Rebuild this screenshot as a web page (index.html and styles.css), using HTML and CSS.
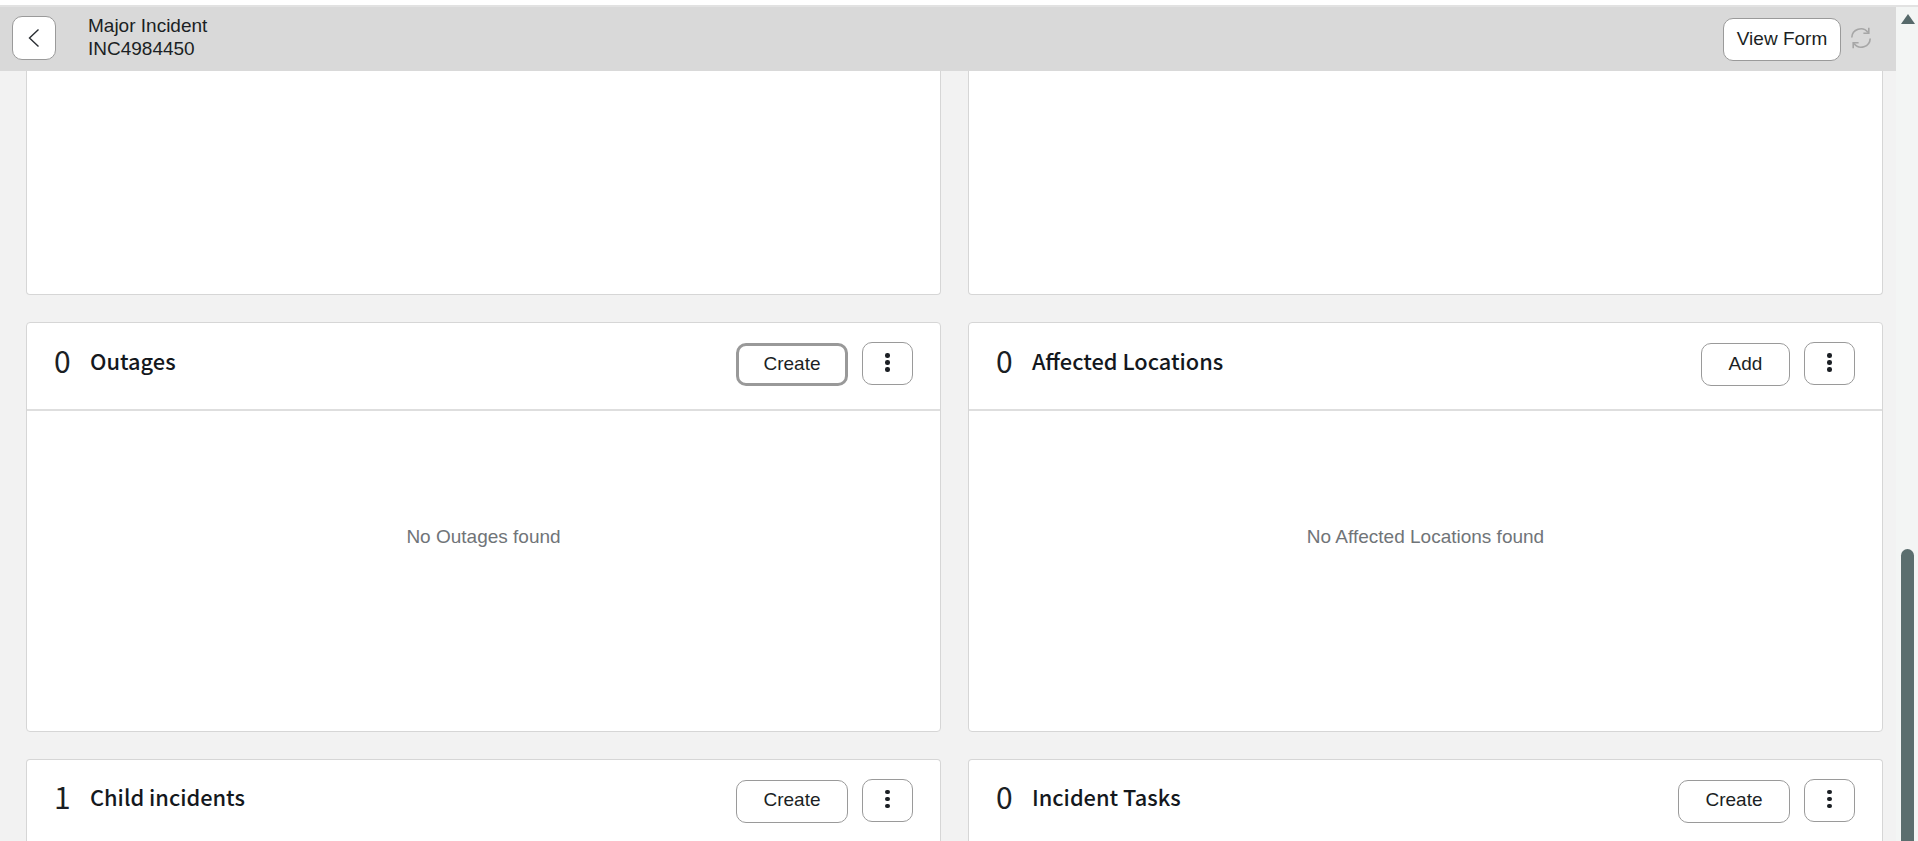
FILE: index.html
```html
<!DOCTYPE html>
<html lang="en">
<head>
<meta charset="utf-8">
<title>Major Incident INC4984450</title>
<link rel="stylesheet" href="styles.css">
</head>
<body>
<div class="top-strip"></div>
<div class="app">
  <main class="main">
    <header class="page-header">
      <button class="btn back-btn" aria-label="Back">
        <svg width="14" height="20" viewBox="0 0 14 20"><path d="M11.5 1.5 L2.5 10 L11.5 18.5" fill="none" stroke="#2a2e33" stroke-width="1.4"/></svg>
      </button>
      <div class="record">
        <div>Major Incident</div>
        <div>INC4984450</div>
      </div>
      <button class="btn view-form">View Form</button>
      <svg class="refresh" width="22" height="22" viewBox="0 0 22 22" fill="none" stroke="#a6a6a6" stroke-width="1.6">
        <path d="M1.8 10.5 A9 9 0 0 1 18 5.4"/>
        <path d="M20.2 11.5 A9 9 0 0 1 4 16.6"/>
        <path d="M18.8 0.8 V6.2 H13.4" />
        <path d="M3.2 21.2 V15.8 H8.6" />
      </svg>
    </header>
    <div class="cards">
      <section class="card card-cut"></section>
      <section class="card card-cut"></section>

      <section class="card card-full">
        <div class="card-head">
          <span class="count">0</span><h2>Outages</h2>
          <button class="btn action focused">Create</button>
          <button class="btn more" aria-label="More"><i></i><i></i><i></i></button>
        </div>
        <div class="empty">No Outages found</div>
      </section>
      <section class="card card-full">
        <div class="card-head">
          <span class="count">0</span><h2>Affected Locations</h2>
          <button class="btn action add">Add</button>
          <button class="btn more" aria-label="More"><i></i><i></i><i></i></button>
        </div>
        <div class="empty">No Affected Locations found</div>
      </section>

      <section class="card card-low">
        <div class="card-head">
          <span class="count">1</span><h2>Child incidents</h2>
          <button class="btn action">Create</button>
          <button class="btn more" aria-label="More"><i></i><i></i><i></i></button>
        </div>
      </section>
      <section class="card card-low">
        <div class="card-head">
          <span class="count">0</span><h2>Incident Tasks</h2>
          <button class="btn action">Create</button>
          <button class="btn more" aria-label="More"><i></i><i></i><i></i></button>
        </div>
      </section>
    </div>
  </main>
  <aside class="scrollbar">
    <span class="arrow-up"></span>
    <span class="thumb"></span>
  </aside>
</div>
</body>
</html>
```

FILE: styles.css
```css
* { box-sizing: border-box; }
html, body { margin: 0; height: 841px; overflow: hidden; }
body {
  background: #f2f2f2;
  font-family: "Liberation Sans", Arial, sans-serif;
  color: #1b1f24;
}
.top-strip {
  height: 7px;
  background: #fff;
  border-bottom: 2px solid #e2e2e2;
}
.app { display: flex; height: 834px; }
.main { width: 1896px; display: flex; flex-direction: column; min-width: 0; }
.scrollbar {
  width: 22px;
  background: #f3f5f4;
  display: flex;
  flex-direction: column;
  align-items: center;
  justify-content: space-between;
  padding: 7px 0 0 1px;
}
.arrow-up {
  width: 0; height: 0;
  border-left: 7.5px solid transparent;
  border-right: 7.5px solid transparent;
  border-bottom: 10px solid #56696a;
}
.thumb {
  width: 13px;
  height: 292px;
  background: #5b6e6e;
  border-radius: 7px 7px 0 0;
}
.page-header {
  height: 64px;
  flex: none;
  background: #d9d9d9;
  display: flex;
  align-items: center;
  padding: 0 24px 0 12px;
  font-size: 19px;
  line-height: 23px;
}
.btn {
  font-family: inherit;
  font-size: 19px;
  color: #1b1f24;
  background: #fff;
  border: 1px solid #9a9a9a;
  border-radius: 10px;
  padding: 0;
  display: flex;
  align-items: center;
  justify-content: center;
}
.back-btn { width: 44px; height: 44px; margin-top: -3px; }
.record { margin-left: 32px; flex: 1; margin-top: -4px; }
.view-form { width: 118px; height: 43px; }
.refresh { margin-left: 9px; margin-top: -3px; flex: none; }
.cards {
  flex: 1;
  display: grid;
  grid-template-columns: 915px 915px;
  grid-template-rows: 224px 409.5px 1fr;
  column-gap: 27px;
  row-gap: 27px;
  padding: 0 14px 0 26px;
  min-height: 0;
}
.card {
  background: #fff;
  border: 1px solid #d6d6d6;
  border-radius: 4px;
  min-width: 0;
}
.card-cut { border-top: 0; border-radius: 0 0 4px 4px; }
.card-full { display: flex; flex-direction: column; }
.card-low { border-bottom: 0; border-radius: 4px 4px 0 0; }
.card-head {
  height: 88px;
  flex: none;
  display: flex;
  align-items: center;
  padding: 0 27px 6px 27px;
  border-bottom: 2px solid #dedede;
}
.card-low .card-head { border-bottom-color: transparent; }
.count {
  font-family: "Noto Sans CJK SC", "Noto Sans", sans-serif;
  font-size: 30px;
  font-weight: 400;
  line-height: 36px;
  margin-top: -7px;
  flex: 0 0 36px;
}
h2 {
  margin: -5px auto 0 0;
  font-family: "Noto Sans CJK SC", "Noto Sans", sans-serif;
  font-size: 21.8px;
  font-weight: 500;
  line-height: 32px;
  color: #14181d;
}
.action { width: 112px; height: 43px; margin-top: 3px; padding-bottom: 2px; }
.action.add { width: 89px; }
.action.focused { border: 3px solid #999; }
.more {
  width: 51px;
  height: 43px;
  margin-left: 14px;
  margin-top: 1px;
  flex-direction: column;
  gap: 2.5px;
  padding-bottom: 2px;
}
.more i {
  width: 4.5px;
  height: 4.5px;
  border-radius: 50%;
  background: #1b1f24;
}
.empty {
  flex: none;
  text-align: center;
  font-size: 19px;
  line-height: 24px;
  color: #707478;
  margin-top: 114px;
}
```
